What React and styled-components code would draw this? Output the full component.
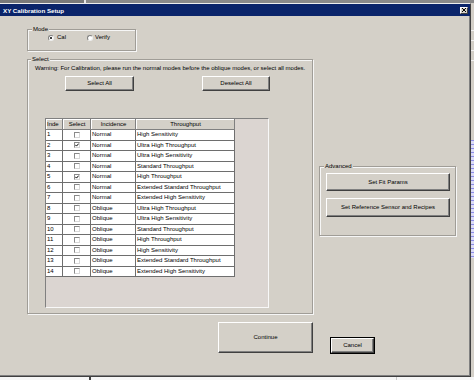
import React from 'react';
import styled, { createGlobalStyle } from 'styled-components';

const GlobalStyle = createGlobalStyle`
  html, body {
    margin: 0;
    padding: 0;
    background: #d4d0c8;
  }
  body {
    font-family: "Liberation Sans", Arial, sans-serif;
    color: #000;
  }
`;

const Screen = styled.div`
  width: 474px;
  height: 380px;
  overflow: hidden;
  display: grid;
  grid-template-columns: 471px 3px;
  grid-template-rows: 3px 374px 3px;
  background: #d4d0c8;
`;

const TopStrip = styled.div`
  grid-column: 1 / 3;
  background: linear-gradient(to right, #7a7a7a 0 84px, #e8e8e8 84px 86px, #8a8a8a 86px);
`;

const SideStrip = styled.div`
  background:
    repeating-linear-gradient(to bottom, #8c8ce6 0 1px, #dcdcf6 1px 4px) 0 137px / 3px 118px no-repeat,
    repeating-linear-gradient(to bottom, #f4f4f4 0 1px, #d4d0c8 1px 10px) 0 27px / 3px 36px no-repeat,
    #d4d0c8;
`;

const BottomStrip = styled.div`
  grid-column: 1 / 3;
  background: linear-gradient(to right, #f6f6f6 0 89px, #404040 89px 91px, #f6f6f6 91px 396px, #c8c8c8 396px 397px, #f6f6f6 397px);
`;

const Window = styled.div`
  display: flex;
  flex-direction: column;
  background: #d4d0c8;
  border-top: 1px solid #eeeeee;
  border-right: 1px solid #404040;
  border-bottom: 1px solid #404040;
  box-shadow: inset -1px -1px 0 #808080;
`;

const TitleBar = styled.div`
  height: 12px;
  flex: none;
  display: flex;
  align-items: center;
  justify-content: space-between;
  padding: 0 2px 0 3px;
  background: #0a246a;
`;

const Title = styled.span`
  color: #fff;
  font-weight: bold;
  font-size: 6.2px;
  line-height: 7px;
`;

const CloseButton = styled.div`
  width: 8px;
  height: 7px;
  box-sizing: border-box;
  display: flex;
  align-items: center;
  justify-content: center;
  background: #d4d0c8;
  border: 1px solid;
  border-color: #fff #404040 #404040 #fff;
`;

const Client = styled.div`
  flex: 1;
  display: flex;
  flex-direction: column;
  align-items: flex-start;
  padding-left: 27px;
  font-size: 6px;
  line-height: 7px;
`;

const GroupBox = styled.fieldset`
  margin: 0;
  padding: 0;
  min-inline-size: 0;
  box-sizing: border-box;
  border: 1px solid #a09d97;
  box-shadow: inset 1px 1px 0 #f6f6f6, 1px 1px 0 #f6f6f6;
`;

const Legend = styled.legend`
  padding: 0 1px;
  margin-left: ${p => p.$offset}px;
  font-size: 6px;
  line-height: 7px;
  background: #d4d0c8;
`;

const ModeBox = styled(GroupBox)`
  width: 109px;
  margin-top: 10px;
`;

const RadioRow = styled.div`
  display: flex;
  padding: 1px 0 9px 20px;
`;

const RadioItem = styled.label`
  display: flex;
  align-items: center;
  gap: ${p => p.$gap}px;
  width: ${p => p.$width}px;
  height: 7px;
`;

const RadioDot = styled.span`
  width: 6px;
  height: 6px;
  box-sizing: border-box;
  border-radius: 50%;
  border: 1px solid;
  border-color: #808080 #eee #eee #808080;
  background: #fff;
  display: flex;
  align-items: center;
  justify-content: center;
  &::after {
    content: '';
    width: 2px;
    height: 2px;
    border-radius: 50%;
    background: ${p => (p.$on ? '#000' : 'transparent')};
  }
`;

const MiddleRow = styled.div`
  display: flex;
  align-items: flex-start;
  gap: 6px;
  margin-top: 5px;
`;

const SelectBox = styled(GroupBox)`
  width: 286px;
  height: 258px;
`;

const SelectInner = styled.div`
  display: flex;
  flex-direction: column;
  align-items: flex-start;
  padding: 2px 0 0 0;
`;

const Warning = styled.div`
  margin-left: 7px;
  white-space: nowrap;
`;

const ButtonRow = styled.div`
  display: flex;
  gap: 68px;
  margin: 4px 0 0 37px;
`;

const Button = styled.button`
  box-sizing: border-box;
  width: ${p => p.$w}px;
  height: ${p => p.$h}px;
  padding: 0;
  font-family: inherit;
  font-size: 6px;
  line-height: 7px;
  color: #000;
  background: #d4d0c8;
  border: 1px solid;
  border-color: #fff #404040 #404040 #fff;
  box-shadow: inset -1px -1px 0 #808080;
  outline: ${p => (p.$default ? '1px solid #000' : 'none')};
  outline-offset: 0;
`;

const GridPanel = styled.div`
  box-sizing: border-box;
  width: 224px;
  height: 190px;
  margin: 27px 0 0 17px;
  background: #dbd5d1;
  border: 1px solid;
  border-color: #808080 #f8f8f8 #f8f8f8 #808080;
`;

const Grid = styled.div`
  display: grid;
  grid-template-columns: 17px 28px 45px 99px;
  grid-template-rows: 11px repeat(14, 10.5px);
  width: 189px;
`;

const HeadCell = styled.div`
  box-sizing: border-box;
  display: flex;
  align-items: center;
  justify-content: ${p => (p.$left ? 'flex-start' : 'center')};
  padding-left: 1px;
  background: #d4d0c8;
  border-right: 1px solid #808080;
  border-bottom: 1px solid #808080;
  box-shadow: inset 1px 1px 0 #fff;
  white-space: nowrap;
  overflow: hidden;
`;

const Cell = styled.div`
  box-sizing: border-box;
  display: flex;
  align-items: center;
  justify-content: ${p => (p.$center ? 'center' : 'flex-start')};
  padding-left: ${p => (p.$center ? 0 : 1)}px;
  background: #fff;
  border-right: 1px solid #6e6e6e;
  border-bottom: 1px solid #6e6e6e;
  white-space: nowrap;
  overflow: hidden;
`;

const CheckBox = styled.span`
  width: 6px;
  height: 6px;
  box-sizing: border-box;
  border: 1px solid;
  border-color: #8a8a8a #d8d8d8 #d8d8d8 #8a8a8a;
  background: #fff;
  display: flex;
  align-items: center;
  justify-content: center;
`;

const AdvancedBox = styled(GroupBox)`
  width: 137px;
  margin-top: 107px;
`;

const AdvancedInner = styled.div`
  display: flex;
  flex-direction: column;
  gap: 7px;
  padding: 3px 0 18px 6px;
`;

const BottomRow = styled.div`
  display: flex;
  align-items: flex-end;
  gap: 18px;
  margin: 8px 0 0 191px;
`;

const rows = [
  [1, false, 'Normal', 'High Sensitivity'],
  [2, true, 'Normal', 'Ultra High Throughput'],
  [3, false, 'Normal', 'Ultra High Sensitivity'],
  [4, false, 'Normal', 'Standard Throughput'],
  [5, true, 'Normal', 'High Throughput'],
  [6, false, 'Normal', 'Extended Standard Throughput'],
  [7, false, 'Normal', 'Extended High Sensitivity'],
  [8, false, 'Oblique', 'Ultra High Throughput'],
  [9, false, 'Oblique', 'Ultra High Sensitivity'],
  [10, false, 'Oblique', 'Standard Throughput'],
  [11, false, 'Oblique', 'High Throughput'],
  [12, false, 'Oblique', 'High Sensitivity'],
  [13, false, 'Oblique', 'Extended Standard Throughput'],
  [14, false, 'Oblique', 'Extended High Sensitivity'],
];

const CloseIcon = () => (
  <svg width="4" height="4" viewBox="0 0 4 4">
    <path d="M0 0L4 4M4 0L0 4" stroke="#000" strokeWidth="1" />
  </svg>
);

const Tick = () => (
  <svg width="4" height="4" viewBox="0 0 4 4">
    <path d="M0.3 1.8L1.5 3.1L3.7 0.6" stroke="#000" strokeWidth="1" fill="none" />
  </svg>
);

export default function App() {
  return (
    <>
      <GlobalStyle />
      <Screen>
        <TopStrip />
        <Window>
          <TitleBar>
            <Title>XY Calibration Setup</Title>
            <CloseButton>
              <CloseIcon />
            </CloseButton>
          </TitleBar>
          <Client>
            <ModeBox>
              <Legend $offset={4}>Mode</Legend>
              <RadioRow>
                <RadioItem $width={39} $gap={3}>
                  <RadioDot $on />
                  Cal
                </RadioItem>
                <RadioItem $width={40} $gap={2}>
                  <RadioDot />
                  Verify
                </RadioItem>
              </RadioRow>
            </ModeBox>

            <MiddleRow>
              <SelectBox>
                <Legend $offset={3}>Select</Legend>
                <SelectInner>
                  <Warning>
                    Warning: For Calibration, please run the normal modes before the oblique modes, or select all modes.
                  </Warning>
                  <ButtonRow>
                    <Button $w={69} $h={15}>Select All</Button>
                    <Button $w={68} $h={15}>Deselect All</Button>
                  </ButtonRow>
                  <GridPanel>
                    <Grid>
                      <HeadCell $left>Inde</HeadCell>
                      <HeadCell>Select</HeadCell>
                      <HeadCell>Incidence</HeadCell>
                      <HeadCell>Throughput</HeadCell>
                      {rows.map(([idx, on, inc, thr]) => (
                        <React.Fragment key={idx}>
                          <Cell>{idx}</Cell>
                          <Cell $center>
                            <CheckBox>{on && <Tick />}</CheckBox>
                          </Cell>
                          <Cell>{inc}</Cell>
                          <Cell>{thr}</Cell>
                        </React.Fragment>
                      ))}
                    </Grid>
                  </GridPanel>
                </SelectInner>
              </SelectBox>

              <AdvancedBox>
                <Legend $offset={4}>Advanced</Legend>
                <AdvancedInner>
                  <Button $w={124} $h={18}>Set Fit Params</Button>
                  <Button $w={124} $h={19}>Set Reference Sensor and Recipes</Button>
                </AdvancedInner>
              </AdvancedBox>
            </MiddleRow>

            <BottomRow>
              <Button $w={95} $h={31}>Continue</Button>
              <Button $w={43} $h={15} $default>Cancel</Button>
            </BottomRow>
          </Client>
        </Window>
        <SideStrip />
        <BottomStrip />
      </Screen>
    </>
  );
}
